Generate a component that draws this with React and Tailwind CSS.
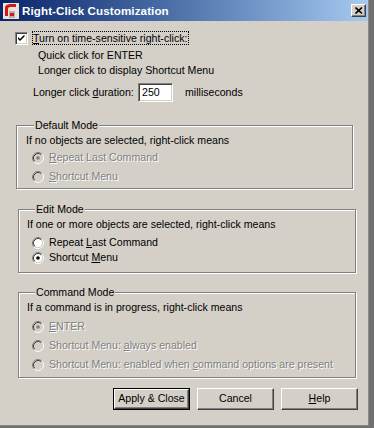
import React from 'react';

const GREY = 'text-[#808080] [text-shadow:1px_1px_0_#fff]';

const Radio = ({ checked, disabled }) => (
  <svg width="12" height="12" viewBox="0 0 12 12" className="shrink-0">
    <circle cx="6" cy="6" r="4.2" fill={disabled ? '#d4d0c8' : '#fff'} />
    <path d="M2.11 9.89 A5.5 5.5 0 0 1 9.89 2.11" fill="none" stroke="#808080" />
    <path d="M9.89 2.11 A5.5 5.5 0 0 1 2.11 9.89" fill="none" stroke="#fff" />
    <path d="M2.82 9.18 A4.5 4.5 0 0 1 9.18 2.82" fill="none" stroke="#404040" />
    <path d="M9.18 2.82 A4.5 4.5 0 0 1 2.82 9.18" fill="none" stroke="#d4d0c8" />
    {checked && <circle cx="6" cy="6" r="1.8" fill={disabled ? '#808080' : '#000'} />}
  </svg>
);

const Option = ({ checked, disabled, className, children }) => (
  <div className={`flex items-center gap-[5px] ${className}`}>
    <Radio checked={checked} disabled={disabled} />
    <span className={disabled ? GREY : ''}>{children}</span>
  </div>
);

const Group = ({ title, className, children }) => (
  <div
    className={`border border-[#808080] shadow-[inset_1px_1px_0_#fff,1px_1px_0_#fff] ${className}`}
  >
    <div className="-mt-[8px] ml-[8px] px-[1px] w-fit h-[14px] leading-[14px] bg-[#d4d0c8]">{title}</div>
    {children}
  </div>
);

const Button = ({ children, isDefault }) => (
  <div className={`w-[77px] h-[22px] ${isDefault ? 'border border-black' : ''}`}>
    <div className="w-full h-full flex items-center justify-center border border-t-white border-l-white border-r-[#404040] border-b-[#404040] shadow-[inset_-1px_-1px_0_#808080] bg-[#d4d0c8]">
      {children}
    </div>
  </div>
);

export default function App() {
  return (
    <div className="w-[374px] h-[428px] bg-[#707070] font-['Liberation_Sans',Arial,sans-serif] text-[10.6px] text-black overflow-hidden">
      <div className="w-[369px] h-[426px] bg-[#d4d0c8] border-r border-b border-[#8a8a8a] flex flex-col">
        {/* title bar */}
        <div className="h-[21px] bg-linear-to-r from-[#0a246a] to-[#a6caf0] flex items-center pl-[3px] pr-[2px]">
          <svg width="16" height="16" viewBox="0 0 16 16" className="shrink-0">
            <rect x="0" y="0" width="16" height="16" fill="#e8e4dc" />
            <path d="M2 13 L2 4 Q3 1 8 1 L13 1 L13 4 L7 4 Q5 4 5 6 L5 13 Z" fill="#d01818" />
            <path d="M6 8 L12 8 L12 15 L6 15 Z" fill="#b8b0a8" />
            <path d="M7 10 L11 10 L11 13 L7 13 Z" fill="#d01818" />
          </svg>
          <span className="ml-[3px] text-white font-bold text-[11.6px] tracking-[0.1px]">Right-Click Customization</span>
          <div className="ml-auto w-[15px] h-[13px] border border-t-white border-l-white border-r-[#404040] border-b-[#404040] shadow-[inset_-1px_-1px_0_#808080] bg-[#d4d0c8] flex items-center justify-center">
            <svg width="8" height="7" viewBox="0 0 8 7">
              <path d="M0.5 0.5 L7 6.5 M7 0.5 L0.5 6.5" stroke="#000" strokeWidth="1.6" />
            </svg>
          </div>
        </div>

        {/* time-sensitive */}
        <div className="mt-[10px] ml-[15px] h-[14px] flex items-center gap-[4px]">
          <div className="w-[13px] h-[13px] bg-white border border-t-[#808080] border-l-[#808080] border-r-white border-b-white shadow-[inset_1px_1px_0_#404040,inset_-1px_-1px_0_#d4d0c8] flex items-center justify-center">
            <svg width="7" height="7" viewBox="0 0 7 7">
              <path d="M0 2 L2 4 L6.5 -0.5 L6.5 1.5 L2 6 L0 4 Z" fill="#000" />
            </svg>
          </div>
          <span className="h-[14px] leading-[12px] border border-dotted border-black pr-[1px]">
            <u>T</u>urn on time-sensitive right-click:
          </span>
        </div>
        <div className="ml-[38px] mt-[3px] h-[15px] leading-[15px]">Quick click for ENTER</div>
        <div className="ml-[38px] h-[15px] leading-[15px]">Longer click to display Shortcut Menu</div>
        <div className="mt-[5px] ml-[33px] h-[19px] flex items-center">
          <span className="w-[105px]">Longer click <u>d</u>uration:</span>
          <div className="w-[35px] h-[19px] bg-white border border-t-[#808080] border-l-[#808080] border-r-white border-b-white shadow-[inset_1px_1px_0_#404040,inset_-1px_-1px_0_#d4d0c8] pl-[3px] leading-[17px]">
            250
          </div>
          <span className="ml-[12px]">milliseconds</span>
        </div>

        {/* Default Mode */}
        <Group title="Default Mode" className="mt-[23px] ml-[16px] w-[337px] h-[64px] pl-[9px]">
          <div className="h-[16px] leading-[16px]">If no objects are selected, right-click means</div>
          <Option checked disabled className="mt-[2px] ml-[6px] h-[16px]">
            <u>R</u>epeat Last Command
          </Option>
          <Option disabled className="mt-[3px] ml-[6px] h-[16px]">
            <u>S</u>hortcut Menu
          </Option>
        </Group>

        {/* Edit Mode */}
        <Group title="Edit Mode" className="mt-[20px] ml-[18px] w-[338px] h-[64px] pl-[8px]">
          <div className="h-[16px] leading-[16px]">If one or more objects are selected, right-click means</div>
          <Option className="mt-[3px] ml-[5px] h-[15px]">
            Repeat <u>L</u>ast Command
          </Option>
          <Option checked className="ml-[5px] h-[15px]">
            Shortcut <u>M</u>enu
          </Option>
        </Group>

        {/* Command Mode */}
        <Group title="Command Mode" className="mt-[19px] ml-[18px] w-[338px] h-[86px] pl-[8px]">
          <div className="h-[17px] leading-[17px]">If a command is in progress, right-click means</div>
          <Option checked disabled className="mt-[1px] ml-[5px] h-[19px]">
            <u>E</u>NTER
          </Option>
          <Option disabled className="ml-[5px] h-[19px]">
            Shortcut Menu: <u>a</u>lways enabled
          </Option>
          <Option disabled className="ml-[5px] h-[19px]">
            Shortcut Menu: enabled when <u>c</u>ommand options are present
          </Option>
        </Group>

        {/* buttons */}
        <div className="mt-[10px] ml-[113px] flex gap-[7px] text-[10.6px]">
          <Button isDefault>Apply &amp; Close</Button>
          <Button>Cancel</Button>
          <Button>
            <span>
              <u>H</u>elp
            </span>
          </Button>
        </div>
      </div>
    </div>
  );
}
